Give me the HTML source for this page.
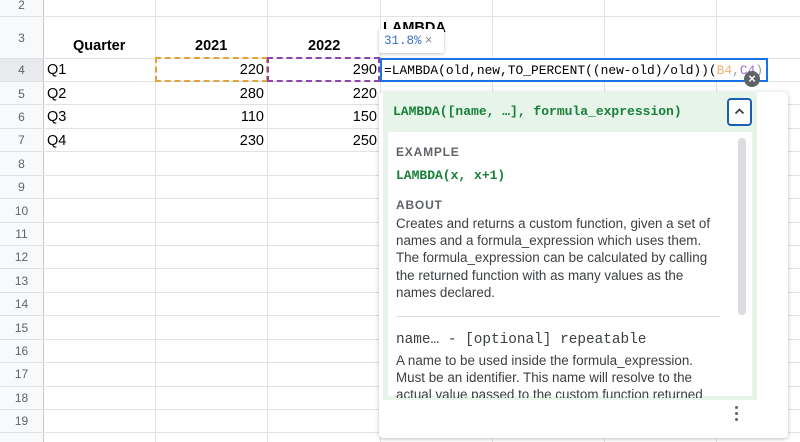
<!DOCTYPE html>
<html><head><meta charset="utf-8"><style>
*{margin:0;padding:0;box-sizing:border-box}
body{width:800px;height:442px;overflow:hidden;background:#fff;font-family:"Liberation Sans",sans-serif;position:relative}
.a{position:absolute}
.hl{position:absolute;left:0;width:800px;height:1px;background:#e2e2e2}
.vl{position:absolute;top:0;height:442px;width:1px;background:#e2e2e2}
.rn{position:absolute;left:0;width:43px;text-align:center;font-size:12px;color:#5f6368}
.c{position:absolute;font-size:14.5px;color:#000}
.mono{font-family:"Liberation Mono",monospace}
</style></head><body>
<div class="a" style="left:0;top:0;width:43px;height:442px;background:#f8f9fa"></div>
<div class="a" style="left:0;top:58px;width:43px;height:23px;background:#e8eaed"></div>
<div class="vl" style="left:43px;background:#c7c7c7"></div>
<div class="vl" style="left:155px"></div>
<div class="vl" style="left:267px"></div>
<div class="vl" style="left:380px"></div>
<div class="vl" style="left:492px"></div>
<div class="vl" style="left:604px"></div>
<div class="vl" style="left:716px"></div>
<div class="hl" style="top:16px"></div>
<div class="hl" style="top:58px"></div>
<div class="hl" style="top:81px"></div>
<div class="hl" style="top:104px"></div>
<div class="hl" style="top:128px"></div>
<div class="hl" style="top:151px"></div>
<div class="hl" style="top:175px"></div>
<div class="hl" style="top:198px"></div>
<div class="hl" style="top:222px"></div>
<div class="hl" style="top:245px"></div>
<div class="hl" style="top:268px"></div>
<div class="hl" style="top:292px"></div>
<div class="hl" style="top:315px"></div>
<div class="hl" style="top:339px"></div>
<div class="hl" style="top:362px"></div>
<div class="hl" style="top:386px"></div>
<div class="hl" style="top:409px"></div>
<div class="hl" style="top:432px"></div>
<div class="rn" style="top:-2px">2</div>
<div class="rn" style="top:31px">3</div>
<div class="rn" style="top:63px">4</div>
<div class="rn" style="top:87px">5</div>
<div class="rn" style="top:110px">6</div>
<div class="rn" style="top:133px">7</div>
<div class="rn" style="top:157px">8</div>
<div class="rn" style="top:180px">9</div>
<div class="rn" style="top:204px">10</div>
<div class="rn" style="top:227px">11</div>
<div class="rn" style="top:250px">12</div>
<div class="rn" style="top:274px">13</div>
<div class="rn" style="top:297px">14</div>
<div class="rn" style="top:321px">15</div>
<div class="rn" style="top:344px">16</div>
<div class="rn" style="top:367px">17</div>
<div class="rn" style="top:391px">18</div>
<div class="rn" style="top:414px">19</div>
<div class="c" style="left:73px;top:38px;font-weight:bold">Quarter</div>
<div class="c" style="left:195px;top:38px;font-weight:bold">2021</div>
<div class="c" style="left:308px;top:38px;font-weight:bold">2022</div>
<div class="c" style="left:47px;top:62px">Q1</div>
<div class="c" style="left:47px;top:86px">Q2</div>
<div class="c" style="left:47px;top:109px">Q3</div>
<div class="c" style="left:47px;top:133px">Q4</div>
<div class="c" style="left:155px;width:109px;text-align:right;top:62px">220</div>
<div class="c" style="left:155px;width:109px;text-align:right;top:86px">280</div>
<div class="c" style="left:155px;width:109px;text-align:right;top:109px">110</div>
<div class="c" style="left:155px;width:109px;text-align:right;top:133px">230</div>
<div class="c" style="left:267px;width:110px;text-align:right;top:62px">290</div>
<div class="c" style="left:267px;width:110px;text-align:right;top:86px">220</div>
<div class="c" style="left:267px;width:110px;text-align:right;top:109px">150</div>
<div class="c" style="left:267px;width:110px;text-align:right;top:133px">250</div>
<div class="a" style="left:155px;top:57px;width:113px;height:25px;border:2px dashed #e6a23c"></div>
<div class="a" style="left:267px;top:57px;width:113px;height:25px;border:2px dashed #8e44ad"></div>
<div class="c" style="left:383px;top:20px;font-weight:bold">LAMBDA</div>
<div class="a" style="left:379px;top:29px;width:65px;height:24px;background:#fff;box-shadow:0 1px 3px rgba(0,0,0,.25);border-radius:2px;font-size:12.5px;color:#3b6fc4;padding:4px 5px;white-space:nowrap"><span class="mono">31.8%</span> <span style="color:#888">×</span></div>
<div class="a" style="left:380px;top:58px;width:388px;height:24px;border:2px solid #1a73e8;background:#fff;font-size:12.9px;line-height:20px;padding-left:2px;color:#000;white-space:nowrap"><span class="mono">=LAMBDA(old,new,TO_PERCENT((new-old)/old))(<span style="color:#f0b070">B4</span><span style="color:#999">,</span><span style="color:#a070c8">C4</span><span style="color:#999">)</span></span></div>
<div class="a" style="left:744px;top:71px;width:16px;height:16px;border-radius:50%;background:#5f6368;color:#fff;font-size:13px;line-height:16px;text-align:center;font-weight:bold">×</div>
<div class="a" style="left:379px;top:92px;width:409px;height:346px;background:#fff;border-radius:4px;box-shadow:0 1px 4px rgba(0,0,0,.25)"></div>
<div class="a" style="left:383px;top:92px;width:5px;height:308px;background:#e6f4ea"></div>
<div class="a" style="left:752px;top:92px;width:5px;height:308px;background:#e6f4ea"></div>
<div class="a" style="left:383px;top:396px;width:374px;height:4px;background:#e6f4ea"></div>
<div class="a" style="left:383px;top:92px;width:374px;height:40px;background:#e6f4ea"></div>
<div class="a mono" style="left:393px;top:104px;font-size:13px;font-weight:bold;color:#188038">LAMBDA([name, …], formula_expression)</div>
<div class="a" style="left:727px;top:98px;width:25px;height:28px;border:2px solid #1a5fb4;border-radius:4px;background:#fff"></div>
<svg class="a" style="left:733px;top:105px" width="13" height="13"><path d="M2.5 8.5 L6.5 4.5 L10.5 8.5" fill="none" stroke="#3c4043" stroke-width="1.8"/></svg>
<div class="a" style="left:738px;top:138px;width:8px;height:177px;background:#dadce0;border-radius:4px"></div>
<div class="a" style="left:396px;top:145px;font-size:12px;color:#5f6368;font-weight:bold;letter-spacing:.8px">EXAMPLE</div>
<div class="a mono" style="left:396px;top:168px;font-size:13px;font-weight:bold;color:#188038">LAMBDA(x, x+1)</div>
<div class="a" style="left:396px;top:198px;font-size:12px;color:#5f6368;font-weight:bold;letter-spacing:.8px">ABOUT</div>
<div class="a" style="left:396px;top:215px;font-size:13.4px;line-height:17.2px;color:#3c4043;width:318px">Creates and returns a custom function, given a set of names and a formula_expression which uses them. The formula_expression can be calculated by calling the returned function with as many values as the names declared.</div>
<div class="a" style="left:396px;top:316px;width:324px;height:1px;background:#dadce0"></div>
<div class="a mono" style="left:396px;top:332px;font-size:14.4px;color:#3c4043;white-space:nowrap">name… - [optional] repeatable</div>
<div class="a" style="left:396px;top:352px;font-size:13.4px;line-height:17.2px;color:#3c4043;width:318px;height:46px;overflow:hidden">A name to be used inside the formula_expression. Must be an identifier. This name will resolve to the actual value passed to the custom function returned</div>
<div class="a" style="left:735px;top:406px;width:3px;height:3px;border-radius:50%;background:#5f6368;box-shadow:0 6px 0 #5f6368,0 12px 0 #5f6368"></div>
</body></html>
